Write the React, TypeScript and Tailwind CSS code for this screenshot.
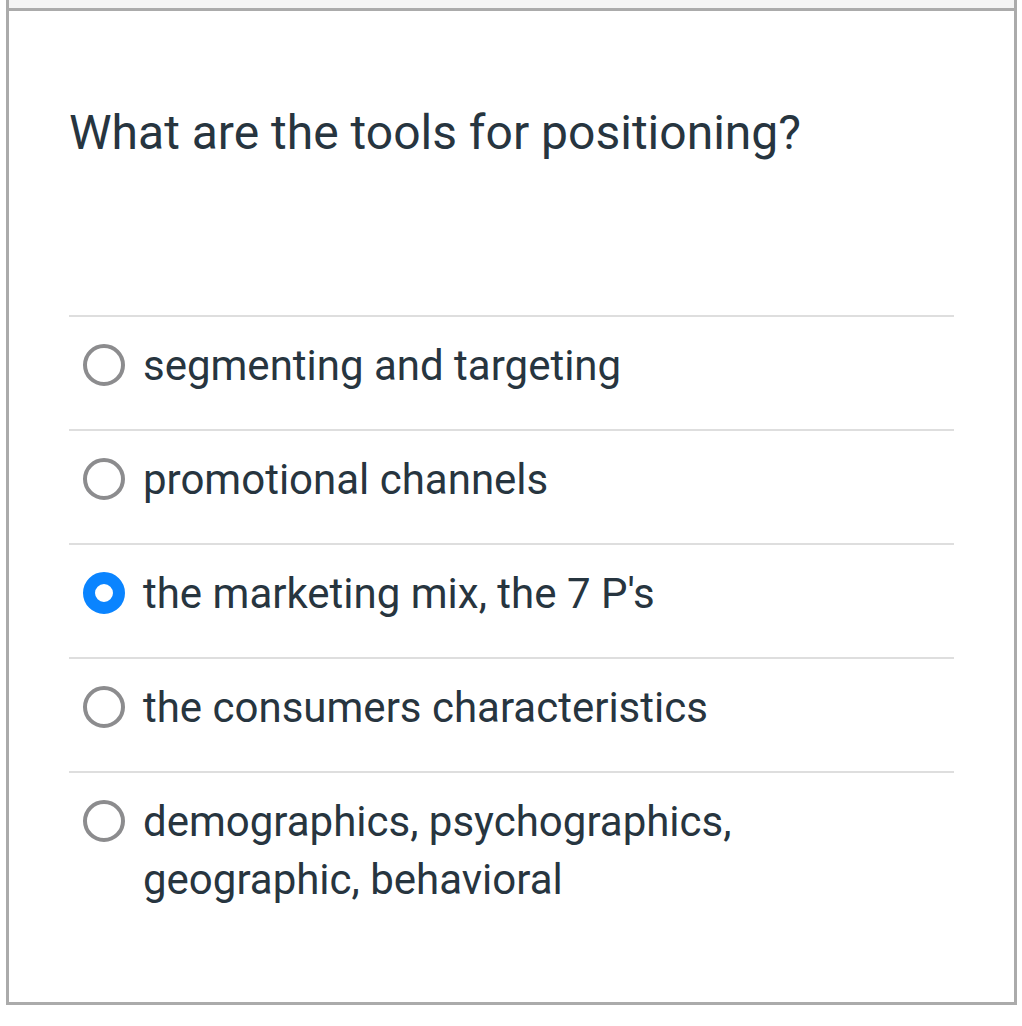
const OPTIONS = [
  { id: "a", label: "segmenting and targeting" },
  { id: "b", label: "promotional channels" },
  { id: "c", label: "the marketing mix, the 7 P's" },
  { id: "d", label: "the consumers characteristics" },
  { id: "e", label: "demographics, psychographics, geographic, behavioral" },
];

const SELECTED = "c";

function Radio({ checked }: { checked: boolean }) {
  if (checked) {
    return (
      <span className="box-border h-[42px] w-[42px] shrink-0 rounded-full border-[12px] border-[#0a84ff] bg-white" />
    );
  }
  return (
    <span className="box-border h-[42px] w-[42px] shrink-0 rounded-full border-[4px] border-[#8c8c8e] bg-white" />
  );
}

export default function App() {
  return (
    <div
      className="min-h-screen bg-white"
      style={{ fontFamily: "Roboto, 'Noto Sans', sans-serif" }}>
      <div className="ml-[6px] w-[1011px] border-x-[3px] border-b-[3px] border-[#ababab]">
        <div className="h-[8px] bg-[#f4f4f4]" />
        <div className="border-t-[3px] border-[#ababab] px-[60px] pt-[92px] pb-[59px]">
          <h1 className="text-[48px] leading-[60px] font-normal text-[#27353f]">
            What are the tools for positioning?
          </h1>
          <div className="mt-[152px]">
            {OPTIONS.map((option) => (
              <label
                key={option.id}
                className="flex cursor-pointer items-start gap-[18px] border-t-2 border-[#dedede] px-[14px] pt-[20px] pb-[34px]">
                <span className="flex h-[56px] items-center">
                  <Radio checked={option.id === SELECTED} />
                </span>
                <span className="max-w-[770px] text-[42px] leading-[58px] text-[#27353f]">
                  {option.label}
                </span>
              </label>
            ))}
          </div>
        </div>
      </div>
    </div>
  );
}
